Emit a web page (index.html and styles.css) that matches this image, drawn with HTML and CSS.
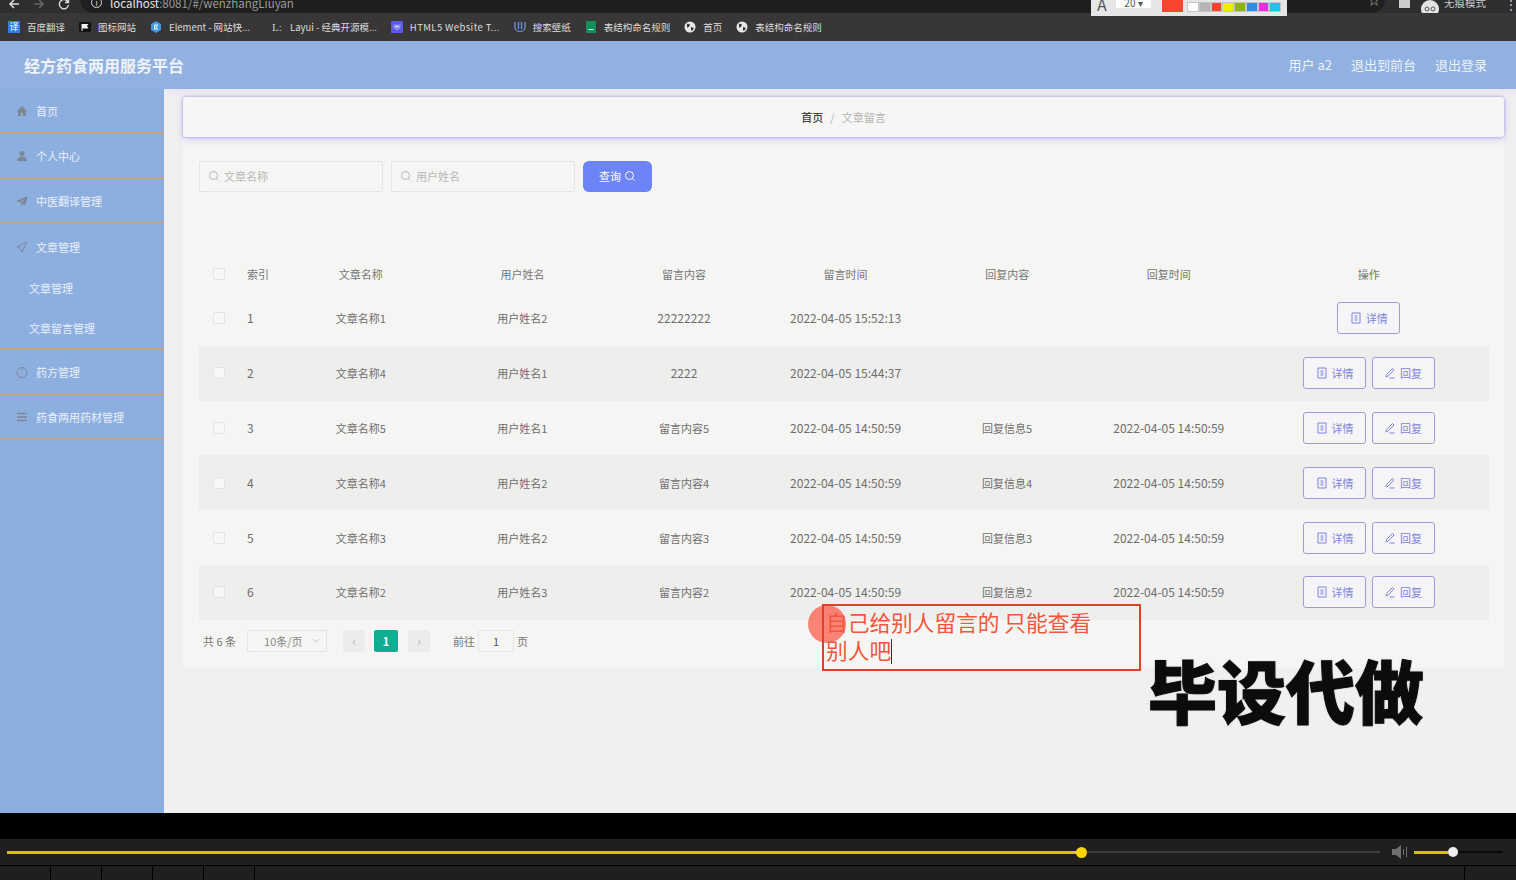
FILE: index.html
```html
<!DOCTYPE html>
<html lang="zh-CN">
  <head>
    <meta charset="UTF-8" />
    <title>经方药食两用服务平台</title>
    <link rel="stylesheet" href="styles.css">
  </head>
  <body>
    <svg class="icon-defs" width="0" height="0">
      <symbol id="i-doc" viewBox="0 0 12 12">
        <path d="M2 1h8v10H2zM4.500 4h3M4.500 6h3M4.500 8h3" fill="none" stroke="currentColor" stroke-width="1" />
      </symbol>
      <symbol id="i-edit" viewBox="0 0 12 12">
        <path d="M8.500 1.500l1.500 1.500-6 6.200-2 .6.500-2.200zM5.500 11h5" fill="none" stroke="currentColor" stroke-width="1" />
      </symbol>
      <symbol id="i-search" viewBox="0 0 12 12">
        <circle cx="5.500" cy="5.500" r="4" fill="none" stroke="currentColor" stroke-width="1" />
        <path d="M8.500 8.500l2 2" stroke="currentColor" stroke-width="1" />
      </symbol>
      <symbol id="i-globe" viewBox="0 0 12 12">
        <circle cx="6" cy="6" r="5.500" fill="#e8e8e8" />
        <path d="M3 2.500l3 1-1 2.500-2 .5zM7 6l3 1-2 3-1-1z" fill="#333" />
      </symbol>
      <symbol id="i-down" viewBox="0 0 10 6">
        <path d="M1 1l4 4 4-4" fill="none" stroke="currentColor" stroke-width="1" />
      </symbol>
    </svg>

    <div class="browser">
      <div class="toolbar">
        <div class="nav-btns">
          <svg width="12" height="12" viewBox="0 0 12 12"><path d="M11 6H2M6 2L2 6l4 4" fill="none" stroke="#ddd" stroke-width="1.500" /></svg>
          <svg width="12" height="12" viewBox="0 0 12 12"><path d="M1 6h9M6 2l4 4-4 4" fill="none" stroke="#666" stroke-width="1.500" /></svg>
          <svg width="12" height="12" viewBox="0 0 12 12"><path d="M10 4a4.600 4.600 0 1 0 .5 3M10.500 1v3.500H7" fill="none" stroke="#ddd" stroke-width="1.400" /></svg>
        </div>
        <div class="address">
          <span class="addr-info">i</span>
          <span class="addr-host">localhost</span><span class="addr-path">:8081/#/wenzhangLiuyan</span>
          <span class="star">☆</span>
        </div>
        <div class="tool-right">
          <svg class="ext-icon" width="14" height="10" viewBox="0 0 14 10"><path d="M1 2h4V0h3v2h4v8H1z" fill="#ccc" /></svg>
          <span class="avatar">
            <svg width="12" height="6" viewBox="0 0 12 6"><circle cx="3" cy="3" r="2" fill="none" stroke="#555" /><circle cx="9" cy="3" r="2" fill="none" stroke="#555" /></svg>
          </span>
          <span class="incognito">无痕模式</span>
          <span class="dots">⋮</span>
        </div>
      </div>
      <div class="bookmarks">
        <span class="mark"><i class="fav fav-blue">译</i>百度翻译</span>
        <span class="mark"><svg class="fav" viewBox="0 0 12 12"><rect x="0" y="1" width="12" height="10" rx="2" fill="#111" /><path d="M2.500 3h7l-1.500 2 1.500 2.500h-6V10h-1z" fill="#eee" /></svg>图标网站</span>
        <span class="mark"><svg class="fav" viewBox="0 0 12 12"><path d="M6 0l5 3v6l-5 3-5-3V3z" fill="#3b9be8" /><path d="M8 4H4.500v4H8M4.500 6H7.500" fill="none" stroke="#fff" /></svg>Element - 网站快...</span>
        <span class="mark mark-layui"><i class="fav fav-layui">L:</i>Layui - 经典开源模...</span>
        <span class="mark mark-html"><svg class="fav" viewBox="0 0 12 12"><rect width="12" height="12" rx="1" fill="#5a5ae6" /><path d="M2.500 3.500h7V7L6 9.500 2.500 7z" fill="#8f8ff0" /><path d="M4.500 5.500h3" stroke="#eee" /></svg>HTML5 Website T...</span>
        <span class="mark"><svg class="fav" viewBox="0 0 12 12"><path d="M1 1v5c0 6 10 6 10 0V1M4.500 1v7M7.500 1v7" fill="none" stroke="#6b97e8" stroke-width="1.200" /></svg>搜索壁纸</span>
        <span class="mark"><svg class="fav" viewBox="0 0 12 12"><rect x="1" width="10" height="12" fill="#12905a" /><path d="M3.500 8.500h5" stroke="#cfe" /></svg>表结构命名规则</span>
        <span class="mark"><svg class="fav"><use href="#i-globe" /></svg>首页</span>
        <span class="mark"><svg class="fav"><use href="#i-globe" /></svg>表结构命名规则</span>
      </div>
    </div>

    <header class="site-header">
      <div class="site-title">经方药食两用服务平台</div>
      <div class="site-links">
        <span>用户 a2</span>
        <span>退出到前台</span>
        <span>退出登录</span>
      </div>
    </header>

    <div class="app-body">
      <aside class="sidebar">
        <div class="menu-item">
          <svg class="menu-icon" viewBox="0 0 12 12"><path d="M6 1L.5 6.500H2V11h3V8h2v3h3V6.500h1.500z" fill="currentColor" /></svg>
          <span>首页</span>
        </div>
        <div class="menu-item">
          <svg class="menu-icon" viewBox="0 0 12 12"><circle cx="6" cy="3.500" r="2.500" fill="currentColor" /><path d="M1 11c0-6 10-6 10 0z" fill="currentColor" /></svg>
          <span>个人中心</span>
          <svg class="menu-arrow"><use href="#i-down" /></svg>
        </div>
        <div class="menu-item">
          <svg class="menu-icon" viewBox="0 0 12 12"><path d="M11.500 1L.5 6l3 1.500L9 3.500 5 8.500V11l2-2 2.500 1z" fill="currentColor" /></svg>
          <span>中医翻译管理</span>
          <svg class="menu-arrow"><use href="#i-down" /></svg>
        </div>
        <div class="menu-group">
          <div class="menu-title">
            <svg class="menu-icon" viewBox="0 0 12 12"><path d="M11 1L1 6l3 1.500L6 11l1.500-3z" fill="none" stroke="currentColor" stroke-width="1" /></svg>
            <span>文章管理</span>
            <svg class="menu-arrow"><use href="#i-down" /></svg>
          </div>
          <div class="submenu-item">文章管理</div>
          <div class="submenu-item">文章留言管理</div>
        </div>
        <div class="menu-item">
          <svg class="menu-icon" viewBox="0 0 12 12"><circle cx="6" cy="6.500" r="5" fill="none" stroke="currentColor" stroke-width="1" /><path d="M6 1v3" stroke="currentColor" /></svg>
          <span>药方管理</span>
          <svg class="menu-arrow"><use href="#i-down" /></svg>
        </div>
        <div class="menu-item">
          <svg class="menu-icon" viewBox="0 0 12 12"><path d="M1 2.500h10M1 6h10M1 9.500h10" stroke="currentColor" stroke-width="1.500" /></svg>
          <span>药食两用药材管理</span>
          <svg class="menu-arrow"><use href="#i-down" /></svg>
        </div>
      </aside>

      <main class="main">
        <div class="breadcrumb">
          <span class="crumb-home">首页</span>
          <span class="crumb-sep">/</span>
          <span class="crumb-now">文章留言</span>
        </div>

        <section class="panel">
          <div class="filters">
            <label class="search-input">
              <svg width="12" height="12"><use href="#i-search" /></svg>
              <span>文章名称</span>
            </label>
            <label class="search-input">
              <svg width="12" height="12"><use href="#i-search" /></svg>
              <span>用户姓名</span>
            </label>
            <button class="search-btn">查询 <svg width="12" height="12"><use href="#i-search" /></svg></button>
          </div>

          <table class="data-table">
            <colgroup>
              <col class="col-check" />
              <col class="col-index" />
              <col span="6" class="col-text" />
              <col />
            </colgroup>
            <thead>
              <tr>
                <th><span class="checkbox"></span></th>
                <th class="cell-left">索引</th>
                <th>文章名称</th>
                <th>用户姓名</th>
                <th>留言内容</th>
                <th>留言时间</th>
                <th>回复内容</th>
                <th>回复时间</th>
                <th class="cell-actions">操作</th>
              </tr>
            </thead>
            <tbody>
              <tr>
                <td><span class="checkbox"></span></td>
                <td class="cell-left cell-num">1</td>
                <td>文章名称1</td>
                <td>用户姓名2</td>
                <td class="cell-num">22222222</td>
                <td class="cell-num">2022-04-05 15:52:13</td>
                <td></td>
                <td></td>
                <td class="cell-actions"><button class="row-btn"><svg width="12" height="12"><use href="#i-doc" /></svg>详情</button></td>
              </tr>
              <tr>
                <td><span class="checkbox"></span></td>
                <td class="cell-left cell-num">2</td>
                <td>文章名称4</td>
                <td>用户姓名1</td>
                <td class="cell-num">2222</td>
                <td class="cell-num">2022-04-05 15:44:37</td>
                <td></td>
                <td></td>
                <td class="cell-actions">
                  <button class="row-btn"><svg width="12" height="12"><use href="#i-doc" /></svg>详情</button>
                  <button class="row-btn"><svg width="12" height="12"><use href="#i-edit" /></svg>回复</button>
                </td>
              </tr>
              <tr>
                <td><span class="checkbox"></span></td>
                <td class="cell-left cell-num">3</td>
                <td>文章名称5</td>
                <td>用户姓名1</td>
                <td>留言内容5</td>
                <td class="cell-num">2022-04-05 14:50:59</td>
                <td>回复信息5</td>
                <td class="cell-num">2022-04-05 14:50:59</td>
                <td class="cell-actions">
                  <button class="row-btn"><svg width="12" height="12"><use href="#i-doc" /></svg>详情</button>
                  <button class="row-btn"><svg width="12" height="12"><use href="#i-edit" /></svg>回复</button>
                </td>
              </tr>
              <tr>
                <td><span class="checkbox"></span></td>
                <td class="cell-left cell-num">4</td>
                <td>文章名称4</td>
                <td>用户姓名2</td>
                <td>留言内容4</td>
                <td class="cell-num">2022-04-05 14:50:59</td>
                <td>回复信息4</td>
                <td class="cell-num">2022-04-05 14:50:59</td>
                <td class="cell-actions">
                  <button class="row-btn"><svg width="12" height="12"><use href="#i-doc" /></svg>详情</button>
                  <button class="row-btn"><svg width="12" height="12"><use href="#i-edit" /></svg>回复</button>
                </td>
              </tr>
              <tr>
                <td><span class="checkbox"></span></td>
                <td class="cell-left cell-num">5</td>
                <td>文章名称3</td>
                <td>用户姓名2</td>
                <td>留言内容3</td>
                <td class="cell-num">2022-04-05 14:50:59</td>
                <td>回复信息3</td>
                <td class="cell-num">2022-04-05 14:50:59</td>
                <td class="cell-actions">
                  <button class="row-btn"><svg width="12" height="12"><use href="#i-doc" /></svg>详情</button>
                  <button class="row-btn"><svg width="12" height="12"><use href="#i-edit" /></svg>回复</button>
                </td>
              </tr>
              <tr>
                <td><span class="checkbox"></span></td>
                <td class="cell-left cell-num">6</td>
                <td>文章名称2</td>
                <td>用户姓名3</td>
                <td>留言内容2</td>
                <td class="cell-num">2022-04-05 14:50:59</td>
                <td>回复信息2</td>
                <td class="cell-num">2022-04-05 14:50:59</td>
                <td class="cell-actions">
                  <button class="row-btn"><svg width="12" height="12"><use href="#i-doc" /></svg>详情</button>
                  <button class="row-btn"><svg width="12" height="12"><use href="#i-edit" /></svg>回复</button>
                </td>
              </tr>
            </tbody>
          </table>

          <div class="pagination">
            <span class="page-total">共 6 条</span>
            <span class="page-size">10条/页<svg width="8" height="5"><use href="#i-down" /></svg></span>
            <span class="page-arrow">‹</span>
            <span class="page-num">1</span>
            <span class="page-arrow">›</span>
            <span class="page-jump">前往</span>
            <span class="page-input">1</span>
            <span class="page-unit">页</span>
          </div>
        </section>
      </main>
    </div>

    <footer class="player">
      <div class="player-gap"></div>
      <div class="player-bar">
        <div class="track">
          <span class="track-done"></span>
          <span class="track-knob"></span>
          <span class="track-rest"></span>
        </div>
        <svg class="volume-icon" width="16" height="14" viewBox="0 0 16 14"><path d="M0 4h4l5-4v14l-5-4H0z" fill="#6f6f6f" /><path d="M11.500 4v6M14.500 2v10" stroke="#6f6f6f" /></svg>
        <div class="volume">
          <span class="volume-done"></span>
          <span class="volume-knob"></span>
          <span class="volume-rest"></span>
        </div>
      </div>
      <div class="player-cells">
        <span></span><span></span><span></span><span></span><span></span>
        <span class="cell-end"></span>
      </div>
    </footer>

    <!-- things drawn over the recording -->
    <div class="color-picker">
      <span class="picker-a">A</span>
      <span class="picker-size">20 ▾</span>
      <span class="picker-main"></span>
      <span class="swatch swatch-white"></span>
      <span class="swatch swatch-gray"></span>
      <span class="swatch swatch-red"></span>
      <span class="swatch swatch-yellow"></span>
      <span class="swatch swatch-green"></span>
      <span class="swatch swatch-blue"></span>
      <span class="swatch swatch-pink"></span>
      <span class="swatch swatch-cyan"></span>
    </div>
    <div class="cursor-dot"></div>
    <div class="note-box">自己给别人留言的 只能查看<br />别人吧<span class="caret"></span></div>
    <div class="watermark">毕设代做</div>
  </body>
</html>
```

FILE: styles.css
```css
* {
  box-sizing: border-box;
}

html,
body {
  margin: 0;
  height: 880px;
  overflow: hidden;
}

body {
  width: 1516px;
  position: relative;
  font-family: "Noto Sans CJK SC", "Noto Sans", sans-serif;
  font-size: 12px;
  color: #666;
  background: #000;
}

.icon-defs {
  position: absolute;
}

/* browser chrome */
.browser {
  height: 41px;
  background: #333;
  color: #ddd;
}

.toolbar {
  height: 13px;
  background: #2e2e2e;
  display: flex;
  align-items: flex-end;
  overflow: hidden;
}

.nav-btns {
  display: flex;
  gap: 13px;
  padding: 0 0 3px 8px;
  flex: none;
}

.address {
  margin-left: 10px;
  height: 28px;
  width: 1305px;
  flex: none;
  background: #1f1f1f;
  border-radius: 14px;
  padding: 12px 0 0 11px;
  font-size: 11.500px;
  line-height: 13px;
  white-space: nowrap;
  display: flex;
  align-items: flex-start;
}

.addr-info {
  display: inline-block;
  width: 11px;
  height: 11px;
  margin-right: 8px;
  border: 1px solid #ddd;
  border-radius: 50%;
  font-size: 8px;
  line-height: 9px;
  text-align: center;
}

.addr-host {
  color: #e8e8e8;
}

.addr-path {
  color: #9a9a9a;
}

.star {
  margin-left: auto;
  margin-right: 5px;
  color: #bbb;
  font-size: 12px;
  margin-top: -4px;
}

.tool-right {
  flex: 1;
  height: 13px;
  padding-left: 13px;
  display: flex;
  align-items: flex-end;
  color: #ccc;
}

.ext-icon {
  margin-bottom: 5px;
  flex: none;
}

.avatar {
  width: 18px;
  height: 18px;
  margin: 0 5px -5px 9px;
  border-radius: 50%;
  background: #e4e4e4;
  display: flex;
  align-items: center;
  justify-content: center;
  flex: none;
}

.incognito {
  font-size: 10.500px;
  line-height: 13px;
  margin-bottom: 4px;
  white-space: nowrap;
}

.dots {
  line-height: 13px;
  margin: 0 0 3px 19px;
}

.bookmarks {
  height: 28px;
  padding-left: 8px;
  background: #383636;
  display: flex;
  align-items: center;
  font-size: 9.500px;
  white-space: nowrap;
}

.mark {
  display: flex;
  align-items: center;
  margin-right: 14px;
}

.mark-layui {
  margin-left: 7px;
}

.mark-html {
  letter-spacing: 0.4px;
}

.fav {
  width: 12px;
  height: 12px;
  margin-right: 7px;
  flex: none;
  font-style: normal;
  font-size: 9px;
  line-height: 12px;
  text-align: center;
  color: #fff;
}

.fav-blue {
  background: #2f7fe0;
}

.fav-layui {
  color: #ccc;
  font-family: "Liberation Serif", serif;
  font-size: 11px;
}

/* page header */
.site-header {
  height: 48px;
  padding: 0 29px 0 24px;
  background: #91b1e1;
  display: flex;
  align-items: center;
  justify-content: space-between;
  color: #eef3fb;
}

.site-title {
  font-size: 16px;
  font-weight: 700;
}

.site-links {
  display: flex;
  gap: 19px;
  font-size: 13px;
  padding-bottom: 2px;
}

/* body */
.app-body {
  height: 724px;
  display: flex;
  background: #f1f0ef;
}

.sidebar {
  width: 164px;
  flex: none;
  background: #8dafe0;
  color: #e9f0fa;
  font-size: 11px;
}

.menu-item,
.menu-group {
  border-bottom: 2px solid #c5a67c;
}

.menu-item,
.menu-title {
  height: 45px;
  padding-left: 16px;
  display: flex;
  align-items: center;
  position: relative;
}

.menu-title {
  height: 44px;
  padding-top: 1px;
}

.menu-item span,
.menu-title span {
  margin-left: 8px;
}

.menu-icon {
  width: 12px;
  height: 12px;
  color: #7f8796;
  flex: none;
}

.menu-arrow {
  position: absolute;
  right: 14px;
  top: 19px;
  width: 10px;
  height: 6px;
  color: #9bb6df;
}

.submenu-item {
  height: 40px;
  padding-left: 29px;
  line-height: 40px;
}

.main {
  flex: 1;
  padding: 8px 12px 0 19px;
  min-width: 0;
  background: linear-gradient(#e6e6f5, #f1f0ef 8px);
}

.breadcrumb {
  height: 40px;
  position: relative;
  z-index: 1;
  background: #f6f6f4;
  border-radius: 3px;
  box-shadow: 0 0 3px #9a94e6, 0 2px 9px #cdc9f4;
  display: flex;
  align-items: center;
  justify-content: center;
  gap: 7px;
  padding-bottom: 1px;
  font-size: 11px;
}

.crumb-home {
  color: #444;
  font-weight: 500;
}

.crumb-sep,
.crumb-now {
  color: #b4b4b4;
}

.panel {
  height: 531px;
  padding: 24px 15px 0 16px;
  background: #f5f5f3;
}

.filters {
  display: flex;
  gap: 8px;
}

.search-input {
  width: 184px;
  height: 31px;
  padding: 0 0 2px 8px;
  border: 1px solid #e6e4e0;
  border-radius: 2px;
  background: #f5f5f3;
  display: flex;
  align-items: center;
  gap: 4px;
  color: #b8b8b8;
  font-size: 11px;
}

.search-btn {
  width: 69px;
  height: 31px;
  padding: 0 0 2px;
  border: none;
  border-radius: 6px;
  background: #6c84f5;
  color: #fff;
  font-family: inherit;
  font-size: 11px;
  display: flex;
  align-items: center;
  justify-content: center;
  gap: 3px;
}

.data-table {
  width: 1290px;
  margin-top: 65px;
  border-collapse: collapse;
  table-layout: fixed;
  text-align: center;
  font-size: 11px;
}

.col-check {
  width: 40px;
}

.col-index {
  width: 41px;
}

.col-text {
  width: 161.600px;
}

.data-table th {
  height: 34px;
  font-weight: 400;
  color: #777;
}

.data-table td {
  height: 54.800px;
  color: #6e6e6e;
}

.data-table .cell-num {
  font-size: 12px;
  padding-bottom: 2px;
}

.data-table .cell-actions {
  padding-right: 2px;
}

.data-table tbody tr:nth-child(even) {
  background: #eeeeed;
}

.data-table .cell-left {
  text-align: left;
  padding-left: 8px;
}

.checkbox {
  display: block;
  width: 12px;
  height: 12px;
  margin: 0 auto;
  border: 1px solid #e4e4e4;
  border-radius: 2px;
  background: #f7f7f6;
}

.row-btn {
  width: 63px;
  height: 32px;
  padding: 0;
  border: 1px solid #9d9ddd;
  border-radius: 3px;
  background: #f5f5f8;
  color: #7f84dc;
  font-family: inherit;
  font-size: 11px;
  display: inline-flex;
  align-items: center;
  justify-content: center;
  gap: 4px;
  vertical-align: middle;
}

.row-btn + .row-btn {
  margin-left: 3px;
}

.pagination {
  margin-top: 10px;
  height: 22px;
  padding-left: 4px;
  display: flex;
  align-items: center;
  font-size: 11px;
  color: #777;
}

.page-size {
  width: 80px;
  height: 22px;
  margin-left: 11px;
  padding: 0 6px 0 16px;
  border: 1px solid #e6e4e0;
  border-radius: 2px;
  display: flex;
  align-items: center;
  justify-content: space-between;
  color: #888;
}

.page-size svg {
  color: #bbb;
}

.page-arrow {
  width: 22px;
  height: 22px;
  margin-left: 16px;
  background: #ececeb;
  border-radius: 2px;
  color: #bbb;
  text-align: center;
  line-height: 20px;
  font-size: 14px;
}

.page-num {
  width: 24px;
  height: 22px;
  margin: 0 -6px 0 9px;
  background: #0fae92;
  border-radius: 2px;
  color: #fff;
  font-weight: 700;
  text-align: center;
  line-height: 22px;
}

.page-jump {
  margin-left: 23px;
}

.page-input {
  width: 36px;
  height: 22px;
  margin: 0 3px;
  border: 1px solid #e8e6e2;
  border-radius: 2px;
  text-align: center;
  line-height: 20px;
  color: #555;
}

/* video player */
.player {
  height: 67px;
  background: #000;
}

.player-gap {
  height: 26px;
}

.player-bar {
  height: 26px;
  background: #1f1f1f;
  padding-left: 7px;
  display: flex;
  align-items: center;
}

.track {
  width: 1373px;
  display: flex;
  align-items: center;
  flex: none;
}

.track-done {
  width: 1070px;
  height: 3px;
  background: #d6c400;
}

.track-knob {
  width: 11px;
  height: 11px;
  margin: 0 -1px;
  border-radius: 50%;
  background: #ffd600;
  z-index: 1;
}

.track-rest {
  flex: 1;
  height: 2px;
  background: #3c3c3c;
}

.volume-icon {
  margin-left: 12px;
  flex: none;
}

.volume {
  width: 89px;
  margin-left: 6px;
  display: flex;
  align-items: center;
  flex: none;
}

.volume-done {
  width: 34px;
  height: 3px;
  background: #d6c400;
}

.volume-knob {
  width: 10px;
  height: 10px;
  border-radius: 50%;
  background: #eee;
}

.volume-rest {
  flex: 1;
  height: 2px;
  background: #0a0a0a;
}

.player-cells {
  height: 15px;
  border-top: 1px solid #000;
  background: #1f1f1f;
  display: flex;
}

.player-cells span {
  width: 51px;
  border-right: 1px solid #000;
}

.player-cells .cell-end {
  margin-left: auto;
  width: 52px;
  border-right: none;
  border-left: 1px solid #000;
}

/* overlays on the recording */
.color-picker {
  position: absolute;
  left: 1091px;
  top: 0;
  width: 196px;
  height: 16px;
  background: #e6e6e6;
  overflow: hidden;
  color: #555;
  font-size: 10px;
  display: flex;
  align-items: flex-start;
}

.picker-a {
  width: 25px;
  margin-top: -4px;
  padding-left: 6px;
  font-size: 16px;
  line-height: 16px;
  flex: none;
}

.picker-size {
  width: 35px;
  height: 8px;
  margin-right: 11px;
  background: #fff;
  line-height: 6px;
  text-align: center;
  flex: none;
}

.picker-main {
  width: 21px;
  height: 12px;
  margin-right: 4px;
  background: #f9452d;
  flex: none;
}

.swatch {
  width: 11.750px;
  height: 10px;
  margin-top: 2px;
  border: 1px solid #c4c4c4;
  flex: none;
}

.swatch-white { background: #fff; }
.swatch-gray { background: #b5b5b5; }
.swatch-red { background: #f9452d; }
.swatch-yellow { background: #eeee00; }
.swatch-green { background: #8cb400; }
.swatch-blue { background: #2d8ce8; }
.swatch-pink { background: #f02de0; }
.swatch-cyan { background: #12c8e8; }

.cursor-dot {
  position: absolute;
  left: 808px;
  top: 605px;
  width: 38px;
  height: 38px;
  border-radius: 50%;
  background: rgba(250, 70, 50, 0.65);
}

.note-box {
  position: absolute;
  left: 822px;
  top: 604px;
  width: 319px;
  height: 67px;
  padding: 2px;
  border: 2px solid #e0402a;
  color: #f5553c;
  font-size: 21.700px;
  line-height: 28px;
  white-space: nowrap;
}

.caret {
  display: inline-block;
  width: 1px;
  height: 25px;
  background: #333;
  vertical-align: -5px;
}

.watermark {
  position: absolute;
  left: 1148px;
  top: 645px;
  color: #0c0c0c;
  font-size: 69px;
  line-height: 88px;
  font-weight: 900;
  white-space: nowrap;
  -webkit-text-stroke: 1px #0c0c0c;
  text-shadow: 0 0 2px #999;
}
```
